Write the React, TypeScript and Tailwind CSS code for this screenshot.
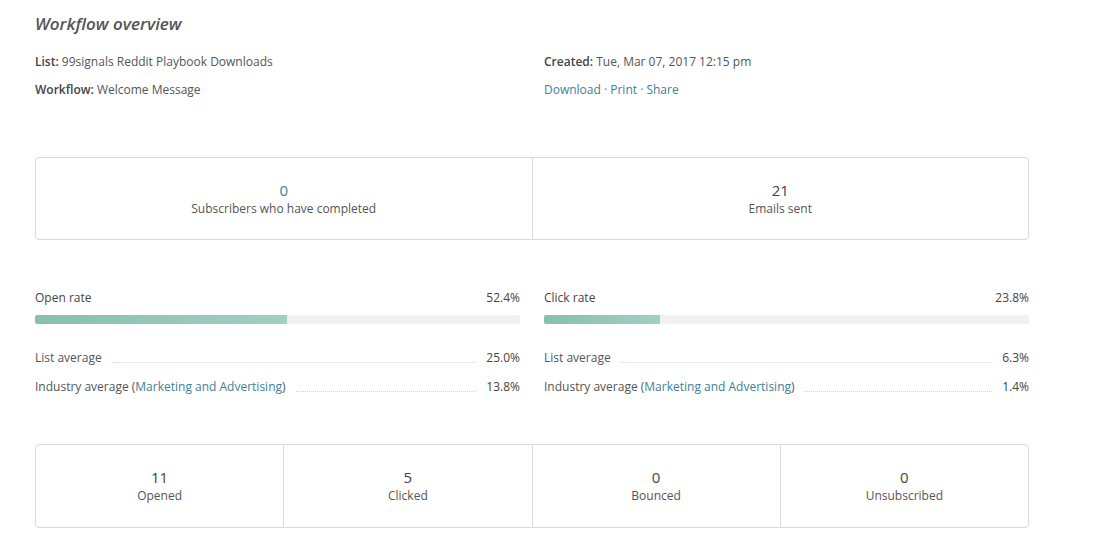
const font = { fontFamily: '"Open Sans", "Liberation Sans", sans-serif' };

function StatRow({ label, value, link }: { label: string; value: string; link?: string }) {
  return (
    <div className="flex items-end h-[29px] pb-[8px]">
      <span className="whitespace-nowrap">
        {label}
        {link && (
          <>
            {" ("}
            <a className="text-[#3e7f98]">{link}</a>
            {")"}
          </>
        )}
      </span>
      <div className="flex-1 mx-[10px] mb-[4px] border-b border-dotted border-[#d4d4d4]" />
      <span className="text-[#444]">{value}</span>
    </div>
  );
}

function RateBlock({
  title,
  rate,
  pct,
  listAvg,
  industryAvg,
}: {
  title: string;
  rate: string;
  pct: number;
  listAvg: string;
  industryAvg: string;
}) {
  return (
    <div className="flex-1">
      <div className="flex justify-between items-center h-[20px]">
        <span className="text-[#444]">{title}</span>
        <span className="text-[#444]">{rate}</span>
      </div>
      <div className="mt-[7px] h-[9px] rounded-[2px] bg-[#f1f1f1] overflow-hidden">
        <div
          className="h-full bg-gradient-to-r from-[#89bfae] via-[#94c7b9] to-[#a0cfc3]"
          style={{ width: `${pct}%` }}
        />
      </div>
      <div className="mt-[22px] text-[#555]">
        <StatRow label="List average" value={listAvg} />
        <StatRow label="Industry average" link="Marketing and Advertising" value={industryAvg} />
      </div>
    </div>
  );
}

function Cell({ value, label, blue, last }: { value: string; label: string; blue?: boolean; last?: boolean }) {
  return (
    <div
      className={`flex-1 flex flex-col items-center justify-center ${last ? "" : "border-r border-[#dadada]"}`}
    >
      <div className={`text-[15px] leading-[20px] font-medium ${blue ? "text-[#3e7f98]" : "text-[#444]"}`}>
        {value}
      </div>
      <div className="text-[12px] leading-[18px] text-[#555]">{label}</div>
    </div>
  );
}

export default function App() {
  return (
    <div className="min-h-screen bg-white text-[12px] text-[#555]" style={font}>
      <div className="w-[994px] ml-[35px] pt-[12px]">
        <h1 className="text-[17px] leading-[24px] italic font-semibold text-[#555]">Workflow overview</h1>

        <div className="mt-[17px] flex gap-[24px]">
          <div className="w-[485px]">
            <div className="h-[28px] leading-[18px]">
              <span className="font-semibold text-[#444]">List:</span> 99signals Reddit Playbook Downloads
            </div>
            <div className="h-[28px] leading-[18px]">
              <span className="font-semibold text-[#444]">Workflow:</span> Welcome Message
            </div>
          </div>
          <div className="flex-1">
            <div className="h-[28px] leading-[18px]">
              <span className="font-semibold text-[#444]">Created:</span> Tue, Mar 07, 2017 12:15 pm
            </div>
            <div className="h-[28px] leading-[18px] text-[#3e7f98]">
              <a>Download</a> · <a>Print</a> · <a>Share</a>
            </div>
          </div>
        </div>

        <div className="mt-[48px] h-[83px] flex rounded-[4px] border border-[#dadada]">
          <Cell value="0" label="Subscribers who have completed" blue />
          <Cell value="21" label="Emails sent" last />
        </div>

        <div className="mt-[48px] flex gap-[24px]">
          <RateBlock title="Open rate" rate="52.4%" pct={52} listAvg="25.0%" industryAvg="13.8%" />
          <RateBlock title="Click rate" rate="23.8%" pct={24} listAvg="6.3%" industryAvg="1.4%" />
        </div>

        <div className="mt-[40px] h-[84px] flex rounded-[4px] border border-[#dadada]">
          <Cell value="11" label="Opened" />
          <Cell value="5" label="Clicked" />
          <Cell value="0" label="Bounced" />
          <Cell value="0" label="Unsubscribed" last />
        </div>
      </div>
    </div>
  );
}
